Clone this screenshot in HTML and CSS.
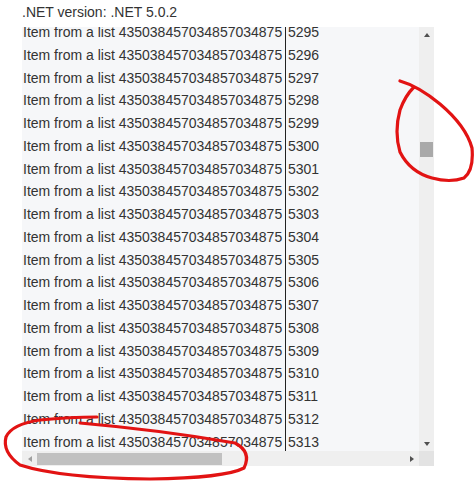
FILE: index.html
```html
<!DOCTYPE html>
<html>
<head>
<meta charset="utf-8">
<link rel="stylesheet" href="styles.css">
</head>
<body>
<div class="page">
  <p class="version">.NET version: .NET 5.0.2</p>
  <div class="box">
    <div class="viewport">
      <div class="list">
        <div class="row"><span class="name">Item from a list 435038457034857034875</span><span class="num">5295</span></div>
        <div class="row"><span class="name">Item from a list 435038457034857034875</span><span class="num">5296</span></div>
        <div class="row"><span class="name">Item from a list 435038457034857034875</span><span class="num">5297</span></div>
        <div class="row"><span class="name">Item from a list 435038457034857034875</span><span class="num">5298</span></div>
        <div class="row"><span class="name">Item from a list 435038457034857034875</span><span class="num">5299</span></div>
        <div class="row"><span class="name">Item from a list 435038457034857034875</span><span class="num">5300</span></div>
        <div class="row"><span class="name">Item from a list 435038457034857034875</span><span class="num">5301</span></div>
        <div class="row"><span class="name">Item from a list 435038457034857034875</span><span class="num">5302</span></div>
        <div class="row"><span class="name">Item from a list 435038457034857034875</span><span class="num">5303</span></div>
        <div class="row"><span class="name">Item from a list 435038457034857034875</span><span class="num">5304</span></div>
        <div class="row"><span class="name">Item from a list 435038457034857034875</span><span class="num">5305</span></div>
        <div class="row"><span class="name">Item from a list 435038457034857034875</span><span class="num">5306</span></div>
        <div class="row"><span class="name">Item from a list 435038457034857034875</span><span class="num">5307</span></div>
        <div class="row"><span class="name">Item from a list 435038457034857034875</span><span class="num">5308</span></div>
        <div class="row"><span class="name">Item from a list 435038457034857034875</span><span class="num">5309</span></div>
        <div class="row"><span class="name">Item from a list 435038457034857034875</span><span class="num">5310</span></div>
        <div class="row"><span class="name">Item from a list 435038457034857034875</span><span class="num">5311</span></div>
        <div class="row"><span class="name">Item from a list 435038457034857034875</span><span class="num">5312</span></div>
        <div class="row"><span class="name">Item from a list 435038457034857034875</span><span class="num">5313</span></div>
      </div>
    </div>
    <div class="vbar">
      <div class="btn"><span class="tri-up"></span></div>
      <div class="vtrack"><div class="vthumb"></div></div>
      <div class="btn"><span class="tri-down"></span></div>
    </div>
    <div class="hbar">
      <div class="btn"><span class="tri-left"></span></div>
      <div class="htrack"><div class="hthumb"></div></div>
      <div class="btn"><span class="tri-right"></span></div>
    </div>
    <div class="corner"></div>
  </div>
  <svg class="ink" width="474" height="481" viewBox="0 0 474 481">
    <path d="M400,81 Q418,86 440,104 Q466,126 472,148 Q474,170 464,178 Q450,183 432,178 Q410,172 400,152 Q394,132 400,110 Q405,96 414,87" />
    <path d="M80,423 Q160,430 235,443 Q252,452 244,468 Q225,478 150,479 Q60,478 20,465 Q2,452 6,437 Q12,424 40,420 Q70,417 97,417" />
  </svg>
</div>
</body>
</html>
```

FILE: styles.css
```css
html, body {
  margin: 0;
  padding: 0;
  background: #ffffff;
  overflow: hidden;
}

.page {
  position: relative;
  width: 474px;
  height: 481px;
  font-family: "Liberation Sans", Arial, sans-serif;
  font-size: 14px;
  color: #333333;
}

.version {
  margin: 0;
  padding: 4px 0 0 22px;
  line-height: 16px;
  height: 16px;
}

.box {
  margin: 7px 0 0 22px;
  display: grid;
  grid-template-columns: 397px 15px;
  grid-template-rows: 424px 15px;
  width: 412px;
  background: #f6f7f9;
}

.viewport {
  overflow: hidden;
  position: relative;
}

.list {
  margin-top: -6px;
}

.row {
  display: flex;
  height: 22.75px;
  line-height: 22.75px;
  white-space: nowrap;
}

.name {
  flex: none;
  width: 262px;
  padding-left: 1px;
  border-right: 1px solid #222222;
}

.num {
  padding-left: 2px;
}

.vbar {
  display: flex;
  flex-direction: column;
  background: #efefef;
}

.hbar {
  display: flex;
  flex-direction: row;
  background: #efefef;
}

.corner {
  background: #e3e3e3;
}

.btn {
  flex: none;
  width: 15px;
  height: 15px;
  display: flex;
  align-items: center;
  justify-content: center;
}

.vtrack {
  flex: 1;
}

.vthumb {
  margin: 100px 1px 0 1px;
  height: 15px;
  background: #a9a9a9;
}

.htrack {
  flex: 1;
  padding-top: 1px;
}

.hthumb {
  width: 185px;
  height: 12px;
  margin-top: 1px;
  background: #c1c1c1;
}

.tri-up {
  width: 0;
  height: 0;
  border-left: 3.5px solid transparent;
  border-right: 3.5px solid transparent;
  border-bottom: 4px solid #505050;
}

.tri-down {
  width: 0;
  height: 0;
  border-left: 3.5px solid transparent;
  border-right: 3.5px solid transparent;
  border-top: 4px solid #505050;
}

.tri-left {
  width: 0;
  height: 0;
  border-top: 3.5px solid transparent;
  border-bottom: 3.5px solid transparent;
  border-right: 4px solid #a0a0a0;
}

.tri-right {
  width: 0;
  height: 0;
  border-top: 3.5px solid transparent;
  border-bottom: 3.5px solid transparent;
  border-left: 4px solid #505050;
}

.ink {
  position: absolute;
  left: 0;
  top: 0;
  pointer-events: none;
}

.ink path {
  fill: none;
  stroke: #e21313;
  stroke-width: 3.2;
  stroke-linecap: round;
  stroke-linejoin: round;
}
```
